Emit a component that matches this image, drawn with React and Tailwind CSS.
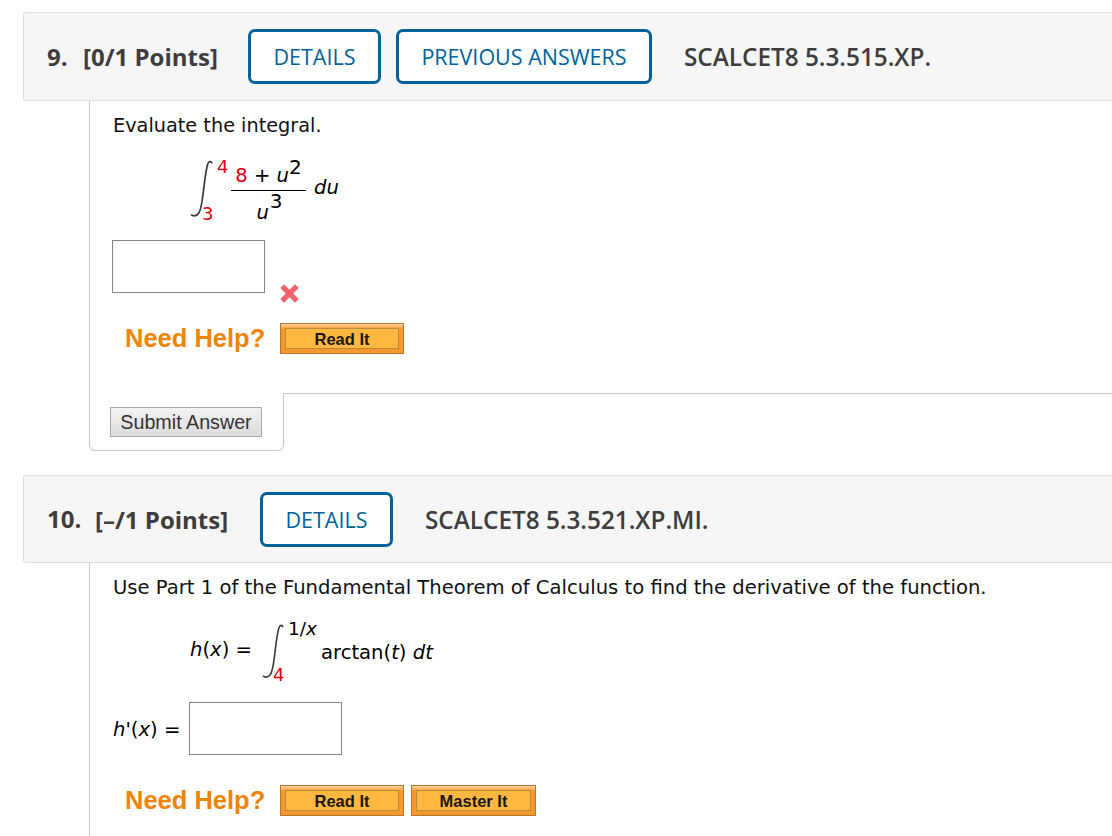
import React from "react"

const Integral = ({ className }) => (
  <svg viewBox="0 0 23 57" className={className} fill="none">
    <path
      d="M22 3.5 C21 1 18.8 0.8 17.6 4.5 C15.4 12 14.4 24 12.8 36 C11.8 44 10.8 50 8.8 53 C7 56 3.6 56.6 1 54.6"
      stroke="#3a3a3a"
      strokeWidth="1.7"
    />
  </svg>
)

const HeaderButton = ({ children, className }) => (
  <button
    className={`h-[55px] pt-[2px] border-[3px] border-[#00629b] rounded-[7px] bg-white text-[#00629b] text-[21.5px] font-normal ${className}`}
  >
    {children}
  </button>
)

const Header = ({ num, points, code, children, numClass, pointsClass, height }) => (
  <div
    className={`ml-[23px] border border-[#dedede] border-r-0 rounded-l-[3px] bg-[#f6f6f6] flex items-center font-['Open_Sans',sans-serif] text-[#3d3d3d] ${height}`}
  >
    <span className={`text-[24px] font-bold ml-[23px] ${numClass}`}>{num}</span>
    <span className={`w-[165px] text-[24px] font-bold whitespace-nowrap ${pointsClass}`}>{points}</span>
    {children}
    <span className="pt-[2px] text-[24.3px] font-semibold whitespace-nowrap">{code}</span>
  </div>
)

const OrangeButton = ({ children, className }) => (
  <div
    className={`h-[31px] border border-[#b5772f] bg-[linear-gradient(#fbd3a3_0,#f7982f_5px)] p-[4px] ${className}`}
  >
    <div className="h-full pt-[1px] border border-[#b98a3c] bg-[#feb83f] flex items-center justify-center font-['Liberation_Sans',sans-serif] font-bold text-[16.5px] text-[#1c1608]">
      {children}
    </div>
  </div>
)

const NeedHelp = ({ children }) => (
  <div className="flex items-center pl-[35px]">
    <span className="w-[155px] font-['Liberation_Sans',sans-serif] font-bold text-[25.5px] leading-none text-[#ef8409] whitespace-nowrap">
      Need Help?
    </span>
    {children}
  </div>
)

const AnswerBox = () => <div className="w-[153px] h-[53px] border border-[#858585] bg-white" />

export default function App() {
  return (
    <div className="w-[1112px] h-[836px] overflow-hidden bg-white pt-3 font-['DejaVu_Sans',sans-serif] text-[19.6px] text-black">
      <Header
        num="9."
        points="[0/1 Points]"
        code="SCALCET8 5.3.515.XP."
        numClass="w-[36px]"
        height="h-[89px]"
      >
        <HeaderButton className="w-[133px]">DETAILS</HeaderButton>
        <HeaderButton className="w-[256px] ml-[15px] mr-[32px]">PREVIOUS ANSWERS</HeaderButton>
      </Header>

      <div className="ml-[89px] border-l border-[#c8c8c8] h-[292px] pt-[14px]">
        <p className="pl-[23px] leading-[22px] text-[19.3px] text-[#111]">Evaluate the integral.</p>
        <div className="flex pl-[100px] mt-[23px] h-[57px]">
          <Integral className="w-[23px] h-[57px]" />
          <div className="relative w-[18px] text-[#e00010]">
            <span className="absolute left-[4px] -top-[7px] text-[18px]">4</span>
            <span className="absolute left-[-11px] top-[40px] text-[18px]">3</span>
          </div>
          <div className="w-[75px] flex flex-col items-center">
            <div className="h-[31px] border-b border-black w-full text-center whitespace-nowrap leading-[32px]">
              <span className="text-[#e00010]">8</span> + <i>u</i>
              <span className="relative -top-[8px] text-[20px] leading-none">2</span>
            </div>
            <div className="pl-[2px] leading-[43px] whitespace-nowrap">
              <i>u</i>
              <span className="relative -top-[11px] ml-[1px] text-[20px] leading-none">3</span>
            </div>
          </div>
          <i className="ml-[8px] mt-[15px] leading-[26px]">du</i>
        </div>
        <div className="flex mt-[23px] pl-[22px] h-[83px]">
          <AnswerBox />
          <svg viewBox="0 0 20 20" className="w-[21px] h-[21px] ml-[14px] mt-[43px]">
            <path d="M3 3 L17 17 M17 3 L3 17" stroke="#f7616a" strokeWidth="5" />
          </svg>
        </div>
        <NeedHelp>
          <OrangeButton className="w-[124px]">Read It</OrangeButton>
        </NeedHelp>
      </div>

      <div className="flex ml-[89px] h-[58px]">
        <div className="w-[195px] h-full border-l border-r border-b border-[#c8c8c8] rounded-b-[6px] pl-[20px] pt-[14px]">
          <button className="w-[152px] h-[30px] pt-[2px] border border-[#a9a9a9] bg-[linear-gradient(#f2f2f2,#dcdcdc)] font-['Liberation_Sans',sans-serif] text-[19.7px] text-[#333] leading-none">
            Submit Answer
          </button>
        </div>
        <div className="flex-1 border-t border-[#c8c8c8]" />
      </div>

      <div className="mt-[24px]">
        <Header
          num="10."
          points="[–/1 Points]"
          code="SCALCET8 5.3.521.XP.MI."
          numClass="w-[48px]"
          pointsClass="pt-[2px]"
          height="h-[88px]"
        >
          <HeaderButton className="w-[133px] mr-[32px]">DETAILS</HeaderButton>
        </Header>
      </div>

      <div className="ml-[89px] border-l border-[#c8c8c8] h-[280px] pt-[14px]">
        <p className="pl-[23px] leading-[22px] text-[#111]">
          Use Part 1 of the Fundamental Theorem of Calculus to find the derivative of the function.
        </p>
        <div className="flex pl-[100px] mt-[24px] h-[56px]">
          <div className="w-[72px] mt-[14px] leading-[26px] whitespace-nowrap">
            <i>h</i>(<i>x</i>) =
          </div>
          <Integral className="w-[22px] h-[56px]" />
          <div className="relative w-[37px]">
            <span className="absolute left-[4px] -top-[8px] text-[18.5px] whitespace-nowrap">
              1/<i>x</i>
            </span>
            <span className="absolute left-[-11px] top-[38px] text-[18px] text-[#e00010]">4</span>
          </div>
          <div className="mt-[17px] leading-[26px] whitespace-nowrap">
            arctan(<i>t</i>) <i>dt</i>
          </div>
        </div>
        <div className="flex items-center pl-[23px] mt-[23px] h-[53px]">
          <span className="w-[76px] pt-[2px] whitespace-nowrap">
            <i>h</i>'(<i>x</i>) =
          </span>
          <AnswerBox />
        </div>
        <div className="mt-[30px]">
          <NeedHelp>
            <OrangeButton className="w-[124px]">Read It</OrangeButton>
            <OrangeButton className="w-[125px] ml-[7px]">Master It</OrangeButton>
          </NeedHelp>
        </div>
      </div>
    </div>
  )
}
